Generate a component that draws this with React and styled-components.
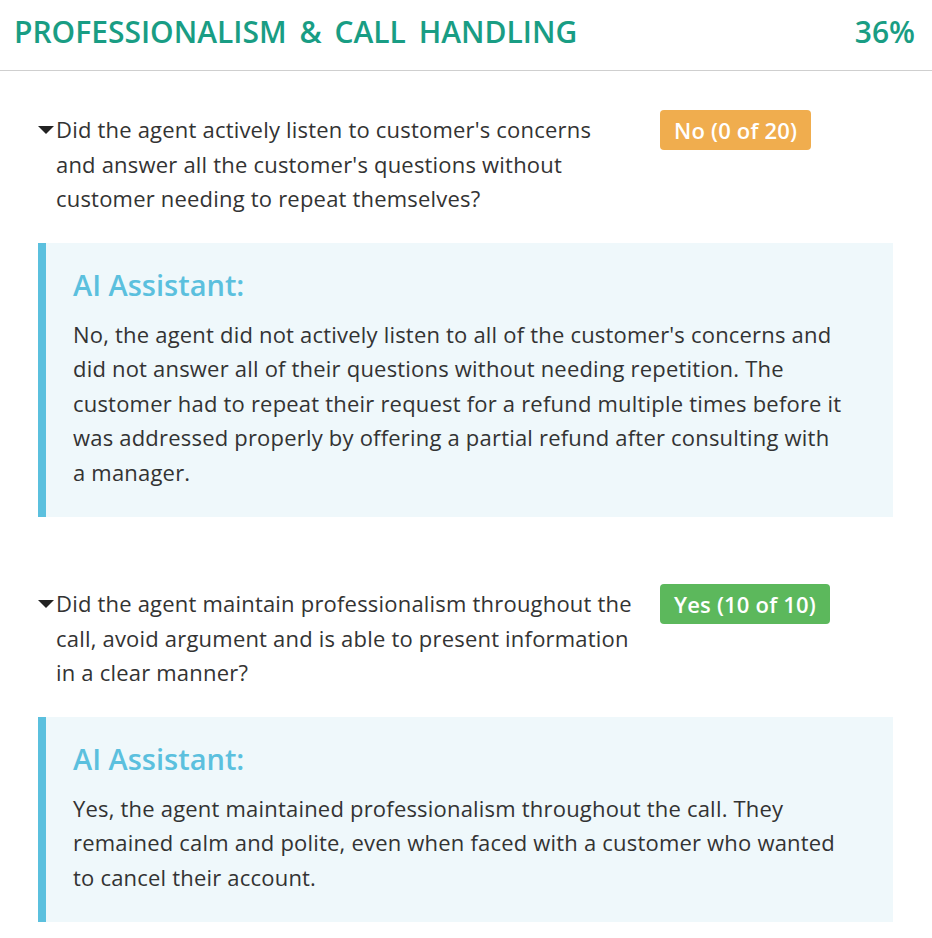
import React from "react";
import styled, { createGlobalStyle } from "styled-components";

const Global = createGlobalStyle`
  html, body { margin: 0; padding: 0; background: #fff; }
  body { font-family: "Open Sans", "Noto Sans", sans-serif; color: #333; }
`;

const Page = styled.div`
  width: 932px;
`;

const Header = styled.div`
  display: flex;
  justify-content: space-between;
  align-items: center;
  height: 62px;
  padding: 0 17px 8px 14px;
  border-bottom: 1px solid #cfcfcf;
`;

const Title = styled.h2`
  margin: 0;
  font-size: 30px;
  font-weight: 600;
  word-spacing: 5px;
  color: #199d84;
`;

const Score = styled.span`
  font-size: 30px;
  font-weight: 600;
  color: #199d84;
`;

const Content = styled.div`
  padding: 41px 39px 0 38px;
`;

const QuestionRow = styled.div`
  display: flex;
  align-items: flex-start;
  margin-top: ${(p) => (p.$first ? "0" : "69px")};
`;

const Caret = styled.span`
  width: 18px;
  height: 34px;
  display: flex;
  align-items: center;
  flex-shrink: 0;
  &::before {
    content: "";
    border-left: 8px solid transparent;
    border-right: 8px solid transparent;
    border-top: 8px solid #222;
    margin-top: 1px;
  }
`;

const QuestionText = styled.div`
  width: 578px;
  font-size: 22px;
  line-height: 34.5px;
  letter-spacing: 0.2px;
  color: #333;
`;

const Badge = styled.span`
  margin-left: 26px;
  margin-top: -2px;
  height: 40px;
  padding: 0 14px;
  display: inline-flex;
  align-items: center;
  border-radius: 4px;
  font-size: 22px;
  font-weight: 600;
  letter-spacing: 0.2px;
  color: #fff;
  white-space: nowrap;
  background: ${(p) => (p.$tone === "yes" ? "#5cb85c" : "#f0ad4e")};
`;

const AIBox = styled.div`
  margin-top: 27px;
  background: #eff8fb;
  border-left: 8px solid #5bc0de;
  padding: 22px 49px 28px 27px;
`;

const AIHeading = styled.h3`
  margin: 0 0 12px;
  font-size: 29px;
  line-height: 40px;
  font-weight: 600;
  color: #5bc0de;
`;

const AIText = styled.p`
  margin: 0;
  font-size: 22px;
  line-height: 34.5px;
  letter-spacing: 0.2px;
  color: #333;
`;

const items = [
  {
    q: "Did the agent actively listen to customer's concerns and answer all the customer's questions without customer needing to repeat themselves?",
    badge: "No (0 of 20)",
    tone: "no",
    a: "No, the agent did not actively listen to all of the customer's concerns and did not answer all of their questions without needing repetition. The customer had to repeat their request for a refund multiple times before it was addressed properly by offering a partial refund after consulting with a manager.",
  },
  {
    q: "Did the agent maintain professionalism throughout the call, avoid argument and is able to present information in a clear manner?",
    badge: "Yes (10 of 10)",
    tone: "yes",
    a: "Yes, the agent maintained professionalism throughout the call. They remained calm and polite, even when faced with a customer who wanted to cancel their account.",
  },
];

export default function App() {
  return (
    <Page>
      <Global />
      <Header>
        <Title>PROFESSIONALISM &amp; CALL HANDLING</Title>
        <Score>36%</Score>
      </Header>
      <Content>
        {items.map((it, i) => (
          <React.Fragment key={i}>
            <QuestionRow $first={i === 0}>
              <Caret />
              <QuestionText>{it.q}</QuestionText>
              <Badge $tone={it.tone}>{it.badge}</Badge>
            </QuestionRow>
            <AIBox>
              <AIHeading>AI Assistant:</AIHeading>
              <AIText>{it.a}</AIText>
            </AIBox>
          </React.Fragment>
        ))}
      </Content>
    </Page>
  );
}
